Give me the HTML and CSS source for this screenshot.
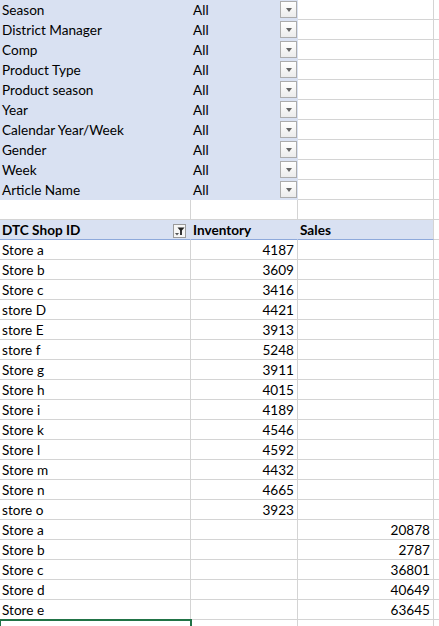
FILE: index.html
```html
<!DOCTYPE html>
<html>
<head>
<meta charset="utf-8">
<link rel="stylesheet" href="styles.css">
</head>
<body>
<div class="sheet">
  <div class="c f">Season</div><div class="c f fb">All<span class="dd"></span></div><div class="c"></div><div class="c d"></div>
  <div class="c f">District Manager</div><div class="c f fb">All<span class="dd"></span></div><div class="c"></div><div class="c d"></div>
  <div class="c f">Comp</div><div class="c f fb">All<span class="dd"></span></div><div class="c"></div><div class="c d"></div>
  <div class="c f">Product Type</div><div class="c f fb">All<span class="dd"></span></div><div class="c"></div><div class="c d"></div>
  <div class="c f">Product season</div><div class="c f fb">All<span class="dd"></span></div><div class="c"></div><div class="c d"></div>
  <div class="c f">Year</div><div class="c f fb">All<span class="dd"></span></div><div class="c"></div><div class="c d"></div>
  <div class="c f">Calendar Year/Week</div><div class="c f fb">All<span class="dd"></span></div><div class="c"></div><div class="c d"></div>
  <div class="c f">Gender</div><div class="c f fb">All<span class="dd"></span></div><div class="c"></div><div class="c d"></div>
  <div class="c f">Week</div><div class="c f fb">All<span class="dd"></span></div><div class="c"></div><div class="c d"></div>
  <div class="c f">Article Name</div><div class="c f fb">All<span class="dd"></span></div><div class="c"></div><div class="c d"></div>

  <div class="c"></div><div class="c"></div><div class="c"></div><div class="c d"></div>

  <div class="c h hA">DTC Shop ID<svg class="fi" width="13" height="14" viewBox="0 0 13 14"><rect x="0.5" y="0.5" width="12" height="13" fill="#f6f6f6" stroke="#9a9a9a"/><path d="M4.5 3.5h7l-2.6 3v4.5h-1.8v-4.5z" fill="#222"/><path d="M2 9h4l-2 2.5z" fill="#555"/></svg></div><div class="c h">Inventory</div><div class="c h hC">Sales</div><div class="c d"></div>

  <div class="c">Store a</div><div class="c n">4187</div><div class="c"></div><div class="c d"></div>
  <div class="c">Store b</div><div class="c n">3609</div><div class="c"></div><div class="c d"></div>
  <div class="c">Store c</div><div class="c n">3416</div><div class="c"></div><div class="c d"></div>
  <div class="c">store D</div><div class="c n">4421</div><div class="c"></div><div class="c d"></div>
  <div class="c">store E</div><div class="c n">3913</div><div class="c"></div><div class="c d"></div>
  <div class="c">store f</div><div class="c n">5248</div><div class="c"></div><div class="c d"></div>
  <div class="c">Store g</div><div class="c n">3911</div><div class="c"></div><div class="c d"></div>
  <div class="c">Store h</div><div class="c n">4015</div><div class="c"></div><div class="c d"></div>
  <div class="c">Store i</div><div class="c n">4189</div><div class="c"></div><div class="c d"></div>
  <div class="c">Store k</div><div class="c n">4546</div><div class="c"></div><div class="c d"></div>
  <div class="c">Store l</div><div class="c n">4592</div><div class="c"></div><div class="c d"></div>
  <div class="c">Store m</div><div class="c n">4432</div><div class="c"></div><div class="c d"></div>
  <div class="c">Store n</div><div class="c n">4665</div><div class="c"></div><div class="c d"></div>
  <div class="c">store o</div><div class="c n">3923</div><div class="c"></div><div class="c d"></div>

  <div class="c">Store a</div><div class="c"></div><div class="c n">20878</div><div class="c d"></div>
  <div class="c">Store b</div><div class="c"></div><div class="c n">2787</div><div class="c d"></div>
  <div class="c">Store c</div><div class="c"></div><div class="c n">36801</div><div class="c d"></div>
  <div class="c">Store d</div><div class="c"></div><div class="c n">40649</div><div class="c d"></div>
  <div class="c">Store e</div><div class="c"></div><div class="c n">63645</div><div class="c d"></div>

  <div class="c act"></div><div class="c"></div><div class="c"></div><div class="c d"></div>
</div>
</body>
</html>
```

FILE: styles.css
```css
html, body {
  margin: 0;
  padding: 0;
  background: #ffffff;
  overflow: hidden;
}

.sheet {
  display: grid;
  grid-template-columns: 191px 107px 136px 1fr;
  font-family: "Lato", "Liberation Sans", sans-serif;
  font-size: 13.6px;
  color: #000;
}

.c {
  height: 18px;
  line-height: 19px;
  padding: 1px 3px 0 2px;
  border-right: 1px solid #d4d4d4;
  border-bottom: 1px solid #d4d4d4;
  white-space: nowrap;
  overflow: hidden;
}

.d {
  border-right: none;
}

.f {
  background: #d9e1f2;
  border-right-color: #d9e1f2;
  border-bottom-color: #d9e1f2;
}

.fb {
  display: flex;
  align-items: flex-start;
  padding-right: 0;
}

.dd {
  margin-left: auto;
  margin-top: 0;
  width: 15px;
  height: 15px;
  border: 1px solid #acacac;
  background: linear-gradient(#ffffff, #ececec);
  display: flex;
  align-items: center;
  justify-content: center;
}

.dd::after {
  content: "";
  width: 0;
  height: 0;
  border-left: 3.5px solid transparent;
  border-right: 3.5px solid transparent;
  border-top: 4px solid #666;
}

.h {
  background: #d9e1f2;
  font-weight: bold;
  border-right-color: #d9e1f2;
  border-bottom-color: #8ea9db;
}

.hA {
  display: flex;
  align-items: flex-start;
  padding-right: 4px;
}

.hC {
  border-right-color: #d4d4d4;
}

.fi {
  margin-left: auto;
  margin-top: 3px;
  flex: none;
}

.n {
  text-align: right;
}

.act {
  outline: 2px solid #217346;
  outline-offset: -1px;
}
```
